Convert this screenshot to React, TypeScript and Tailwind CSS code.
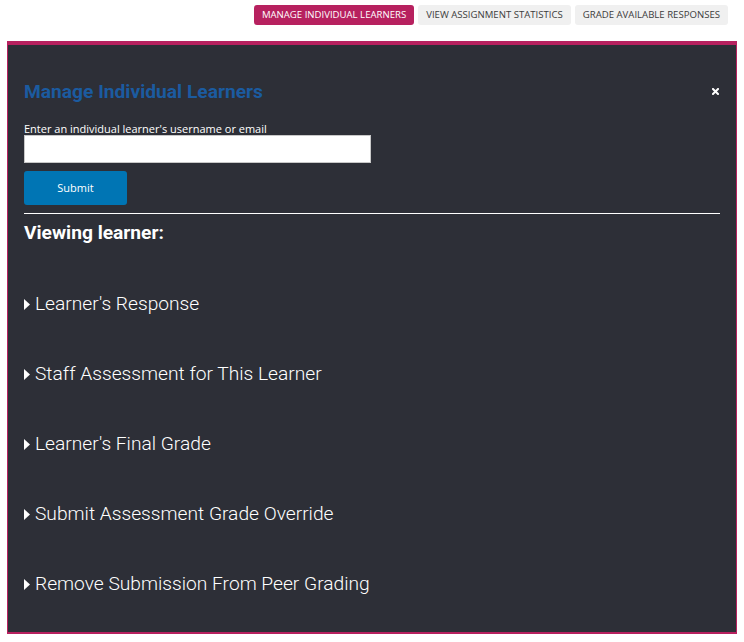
import { useState } from "react";

const sections = [
  "Learner's Response",
  "Staff Assessment for This Learner",
  "Learner's Final Grade",
  "Submit Assessment Grade Override",
  "Remove Submission From Peer Grading",
];

const tabs = ["Manage Individual Learners", "View Assignment Statistics", "Grade Available Responses"];

export default function App() {
  const [active, setActive] = useState(0);
  const [query, setQuery] = useState("");

  return (
    <div className="min-h-[642px] bg-white font-['Open_Sans',sans-serif]">
      <div className="flex justify-end gap-[4px] pr-[16px] pt-[5px]">
        {tabs.map((tab, index) => (
          <button
            key={tab}
            type="button"
            onClick={() => setActive(index)}
            className={`h-[20px] rounded-[3px] px-[8px] text-[9.6px] uppercase leading-[20px] ${
              index === active ? "bg-[#b7215f] text-white" : "bg-[#f0f0f0] text-[#3c3c3c]"
            }`}
          >
            {tab}
          </button>
        ))}
      </div>

      <section className="mt-[16px] ml-[7px] w-[730px] border-x border-b-2 border-t-4 border-[#b7215f] bg-[#2d2f37] px-[16px] pb-[36px] pt-[35px]">
        <div className="flex items-start justify-between">
          <h2 className="m-0 font-['Roboto',sans-serif] text-[19.2px] font-bold leading-[24px] text-[#1b5ba0]">
            Manage Individual Learners
          </h2>
          <button type="button" aria-label="Close" className="mr-[1px] mt-[8px] text-white">
            <svg width="7" height="7" viewBox="0 0 7 7">
              <path d="M1 1L6 6M6 1L1 6" stroke="currentColor" strokeWidth="2" strokeLinecap="square" />
            </svg>
          </button>
        </div>

        <label className="mt-[18px] block text-[11px] leading-[13px] text-white">
          Enter an individual learner's username or email
        </label>
        <input
          type="text"
          value={query}
          onChange={(event) => setQuery(event.target.value)}
          className="block h-[28px] w-[347px] border border-[#c8c8c8] bg-white px-2 text-[12px] text-[#333] outline-none"
        />
        <button
          type="button"
          className="mt-[8px] h-[34px] w-[103px] rounded-[3px] bg-[#0075b4] text-[11px] text-white"
        >
          Submit
        </button>

        <hr className="mt-[8px] border-0 border-t border-white" />

        <h3 className="m-0 mt-[7px] font-['Roboto',sans-serif] text-[19.2px] font-bold leading-[24px] text-white">
          Viewing learner:
        </h3>

        <div className="mt-[47px] flex flex-col gap-[46px]">
          {sections.map((section) => (
            <button
              key={section}
              type="button"
              className="flex h-[24px] items-center gap-[5px] text-left font-['Roboto',sans-serif] text-[19.2px] font-light text-white"
            >
              <svg width="6" height="11" viewBox="0 0 6 11">
                <path d="M0 0L6 5.5L0 11Z" fill="currentColor" />
              </svg>
              {section}
            </button>
          ))}
        </div>
      </section>
    </div>
  );
}
